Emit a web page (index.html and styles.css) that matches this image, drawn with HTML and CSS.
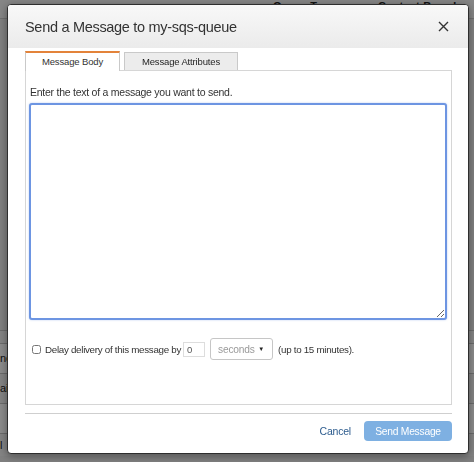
FILE: index.html
```html
<!DOCTYPE html>
<html lang="en">
<head>
    <meta charset="UTF-8">
    <meta name="viewport" content="width=device-width, initial-scale=1.0">
    <title>Send a Message - SQS</title>
    <link rel="stylesheet" href="styles.css">
</head>
<body>
    <!-- page behind the modal -->
    <div class="page">
        <div class="page-head">
            <span class="col-type">Queue Type</span>
            <span class="col-dedup">Content-Based</span>
        </div>
        <div class="page-rows">
            <div class="row first"></div>
            <div class="row"><span>nc</span></div>
            <div class="row"><span>ai</span></div>
            <div class="row"></div>
            <div class="row last"><span>l</span></div>
        </div>
    </div>
    <div class="overlay"></div>

    <div class="modal">
        <div class="modal-header">
            <h2>Send a Message to my-sqs-queue</h2>
            <button class="close" aria-label="Close">
                <svg width="11" height="11" viewBox="0 0 11 11">
                    <path d="M1 1 L10 10 M10 1 L1 10" stroke="#333" stroke-width="1.4" fill="none"/>
                </svg>
            </button>
        </div>
        <div class="modal-body">
            <div class="tabs">
                <div class="tab active">Message Body</div>
                <div class="tab">Message Attributes</div>
            </div>
            <div class="tab-panel">
                <p class="hint">Enter the text of a message you want to send.</p>
                <textarea class="message-text"></textarea>
                <div class="delay-row">
                    <input type="checkbox" class="delay-check" id="delayCheck">
                    <label for="delayCheck">Delay delivery of this message by</label>
                    <input type="text" class="delay-value" value="0">
                    <div class="unit-select">
                        <span>seconds</span>
                        <span class="caret">&#9660;</span>
                    </div>
                    <span>(up to 15 minutes).</span>
                </div>
            </div>
            <div class="separator"></div>
        </div>
        <div class="modal-footer">
            <a href="#" class="cancel">Cancel</a>
            <button class="btn-send" disabled>Send Message</button>
        </div>
    </div>
</body>
</html>
```

FILE: styles.css
```css
body {
    margin: 0;
    font-family: "Liberation Sans", Arial, sans-serif;
    color: #333;
    background: #e9e9e9;
    width: 474px;
    height: 462px;
    overflow: hidden;
}
.page-head {
    height: 18px;
    background: #f4f4f4;
    border-bottom: 1px solid #ccc;
    position: relative;
    overflow: hidden;
    font-size: 11px;
    font-weight: bold;
    line-height: 12px;
    color: #222;
}
.page-head span {
    position: absolute;
    top: 0;
}
.col-type {
    left: 273px;
}
.col-dedup {
    left: 378px;
}
.page-rows {
    margin-top: 311px;
}
.row {
    height: 29px;
    border-top: 1px solid #c4c4c4;
    background: #fff;
    font-size: 11px;
    line-height: 29px;
    color: #222;
}
.row:nth-child(odd) {
    background: #f1f1f1;
}
.row.first {
    height: 12px;
}
.row.last {
    height: 22px;
    line-height: 22px;
}
.overlay {
    position: fixed;
    inset: 0;
    background: rgba(0, 0, 0, 0.45);
}
.modal {
    position: absolute;
    left: 7px;
    top: 4px;
    width: 462px;
    height: 450px;
    box-sizing: border-box;
    background: #fff;
    border: 1px solid #2e2e2e;
    border-radius: 4px;
    box-shadow: 0 2px 8px rgba(0, 0, 0, 0.4);
    overflow: hidden;
}
.modal-header {
    height: 43px;
    display: flex;
    align-items: center;
    justify-content: space-between;
    padding: 0 19px 0 17px;
    background: linear-gradient(#f8f8f8, #ebebeb);
}
.modal-header h2 {
    margin: 0;
    font-size: 14.5px;
    letter-spacing: -0.3px;
    font-weight: normal;
    color: #333;
}
.close {
    border: none;
    background: none;
    padding: 0;
    width: 11px;
    height: 11px;
    display: flex;
}
.modal-body {
    padding: 3px 16px 0 17px;
}
.tabs {
    display: flex;
    gap: 4px;
    align-items: flex-end;
    height: 19px;
}
.tab {
    box-sizing: border-box;
    height: 18px;
    width: 114px;
    border: 1px solid #c9c9c9;
    border-bottom: none;
    background: #ececec;
    font-size: 9.5px;
    letter-spacing: -0.15px;
    line-height: 17px;
    text-align: center;
    color: #1e1e1e;
}
.tab.active {
    width: 95px;
    height: 20px;
    margin-bottom: -1px;
    background: #fff;
    border-top: 2px solid #e3833a;
    color: #333;
    position: relative;
}
.tab-panel {
    box-sizing: border-box;
    height: 335px;
    border: 1px solid #d6d6d6;
    padding: 0 4px 0 3px;
}
.hint {
    margin: 0;
    padding: 13px 0 0 1px;
    font-size: 10.5px;
    letter-spacing: -0.25px;
    line-height: 16px;
    color: #333;
}
.message-text {
    display: block;
    box-sizing: border-box;
    width: 418px;
    height: 217px;
    margin-top: 3px;
    border: 2px solid #6d95e2;
    border-radius: 3px;
    box-shadow: 0 0 2px rgba(109, 149, 226, 0.5);
    outline: none;
    resize: vertical;
}
.delay-row {
    margin-top: 18px;
    height: 22px;
    display: flex;
    align-items: center;
    font-size: 9.8px;
    letter-spacing: -0.3px;
    color: #333;
    padding-left: 3px;
}
.delay-check {
    margin: 0 4px 0 0;
    width: 9px;
    height: 9px;
}
.delay-value {
    box-sizing: border-box;
    width: 22px;
    height: 15px;
    margin: 0 5px 0 2px;
    padding: 0 3px;
    border: 1px solid #ddd;
    font-family: inherit;
    font-size: 9.5px;
    color: #555;
}
.unit-select {
    box-sizing: border-box;
    width: 63px;
    height: 22px;
    margin-right: 5px;
    border: 1px solid #c6c6c6;
    border-radius: 3px;
    display: flex;
    align-items: center;
    justify-content: space-between;
    padding: 0 8px 0 7px;
    color: #9a9a9a;
    font-size: 10.2px;
    letter-spacing: -0.2px;
}
.caret {
    font-size: 6px;
    color: #222;
}
.separator {
    height: 1px;
    margin-top: 8px;
    background: #cfcfcf;
}
.modal-footer {
    display: flex;
    justify-content: flex-end;
    align-items: center;
    gap: 13px;
    padding: 7px 16px 0 17px;
}
.cancel {
    font-size: 10.5px;
    letter-spacing: -0.2px;
    color: #2d5c8e;
    text-decoration: none;
}
.btn-send {
    width: 88px;
    height: 20px;
    border: none;
    border-radius: 4px;
    background: #7eb0e2;
    color: #fff;
    font-family: inherit;
    font-size: 10.3px;
    letter-spacing: -0.25px;
    padding: 0;
}
```
